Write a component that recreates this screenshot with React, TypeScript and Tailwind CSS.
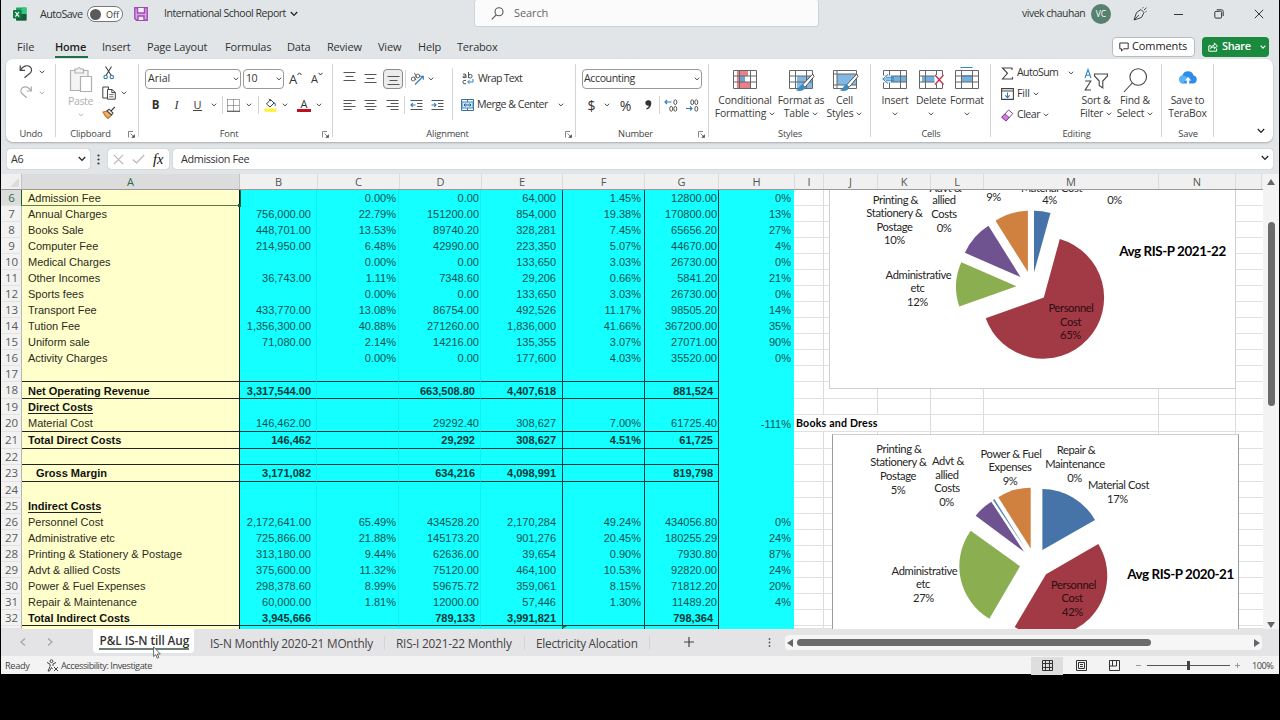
import React from "react";

type Kids = { children?: React.ReactNode };

const Chev = ({ className = "" }: { className?: string }) => (
  <svg viewBox="0 0 6 4" className={`h-[4px] w-[6px] shrink-0 ${className}`} fill="none" stroke="#444" strokeWidth="1">
    <path d="M0.8 0.7 L3 2.9 L5.2 0.7" />
  </svg>
);

const BigChev = ({ className = "" }: { className?: string }) => (
  <svg viewBox="0 0 8 6" className={`h-[6px] w-[8px] shrink-0 ${className}`} fill="none" stroke="#222" strokeWidth="1.3">
    <path d="M0.8 1 L4 4.4 L7.2 1" />
  </svg>
);

const Launcher = () => (
  <svg viewBox="0 0 7 7" className="h-[7px] w-[7px]" fill="none" stroke="#666" strokeWidth="0.8">
    <path d="M0.5 6.5 V0.5 H5 M2.5 2.5 L6 6" />
    <path d="M6.8 3.2 V6.8 H3.2 Z" fill="#444" stroke="none" />
  </svg>
);

const Sep = ({ className = "" }: { className?: string }) => (
  <div className={`w-px shrink-0 bg-[#d4d4d4] ${className}`} />
);

const Group = ({ label, width, launcher, children }: Kids & { label: string; width: string; launcher?: boolean }) => (
  <div className={`flex h-[83px] shrink-0 ${width}`}>
    <div className="flex min-w-0 flex-1 flex-col">
      <div className="h-[68px]">{children}</div>
      <div className="flex h-[14px] items-center text-[9.3px] leading-[14px] tracking-[-0.2px] text-[#444]">
        <div className={`flex-1 text-center whitespace-nowrap ${launcher ? "pr-[3px]" : "pl-[1px]"}`}>{label}</div>
        {launcher && <div className="w-[10px]"><Launcher /></div>}
      </div>
    </div>
    <Sep className="mt-[5px] h-[73px]" />
  </div>
);

const Lines = ({ rows, className = "" }: { rows: [number, number, number][]; className?: string }) => (
  <svg viewBox="0 0 13 13" className={`h-[13px] w-[13px] shrink-0 ${className}`} stroke="#555" strokeWidth="1">
    {rows.map(([a, b, y]) => (
      <path key={y} d={`M${a} ${y} H${b}`} />
    ))}
  </svg>
);

const IndentIcon = ({ out, className = "" }: { out?: boolean; className?: string }) => (
  <svg viewBox="0 0 13 13" className={`h-[13px] w-[13px] shrink-0 ${className}`} fill="none" strokeWidth="1">
    <path stroke="#555" d="M0.5 1.5 H12.5 M7 4.5 H12.5 M7 7.5 H12.5 M0.5 10.5 H12.5" />
    <path stroke="#2f7cb8" strokeWidth="1.1" d={out ? "M5.5 6 H1 M2.8 4.2 L1 6 L2.8 7.8" : "M0.5 6 H5 M3.2 4.2 L5 6 L3.2 7.8"} />
  </svg>
);

const DecimalIcon = ({ dec, className = "" }: { dec?: boolean; className?: string }) => (
  <svg viewBox="0 0 14 13" className={`h-[13px] w-[14px] shrink-0 ${className}`} fill="none">
    <g stroke="#555" strokeWidth="1">
      <ellipse cx="11.3" cy="3.2" rx="1.5" ry="2.4" />
      <ellipse cx="11.3" cy="9.8" rx="1.5" ry="2.4" />
      {dec ? <ellipse cx="7.2" cy="3.2" rx="1.5" ry="2.4" /> : <ellipse cx="7.2" cy="9.8" rx="1.5" ry="2.4" />}
    </g>
    <path stroke="#2f7cb8" strokeWidth="1.1" d={dec ? "M1 9.5 H7 M5 7.5 L7 9.5 L5 11.5" : "M7.5 3 H1 M3 1 L1 3 L3 5"} />
  </svg>
);

const BigButton = ({ icon, lines, width, chev }: { icon: React.ReactNode; lines: string[]; width: string; chev?: "below" | "inline" }) => (
  <div className={`flex shrink-0 flex-col items-center text-[10.4px] leading-[13px] text-[#3a3a3a] ${width}`}>
    <div className="flex h-[35px] items-end justify-center pb-[2px]">{icon}</div>
    <div className="whitespace-nowrap tracking-[-0.2px]">{lines[0]}</div>
    {chev === "below" ? (
      <div className="flex h-[13px] items-center"><Chev /></div>
    ) : (
      <div className="flex items-center whitespace-nowrap tracking-[-0.2px]">
        {lines[1]}
        {chev === "inline" && <Chev className="ml-[3px]" />}
      </div>
    )}
  </div>
);

const Brush = () => (
  <>
    <path d="M24.8 6 L14.5 17 L17 19.3 L26 8.5 Z" fill="#fff" stroke="#555" strokeWidth="1" />
    <path d="M14.8 16.5 C11 17 11.5 21.5 7.5 22 C11 24 16.8 23 17.3 19 Z" fill="#3c8cc4" />
  </>
);

const GridIcon = ({ kind }: { kind: "cond" | "table" | "cell" | "insert" | "delete" | "format" }) => (
  <svg viewBox="0 0 26 24" className="h-[24px] w-[26px] overflow-visible" fill="none" strokeWidth="1">
    {kind === "cond" && (
      <>
        <path fill="#e8808a" d="M5 2h11v6H5z M5 14h13v6H5z" />
        <path fill="#e8808a" d="M5 8h3v6H5z" />
        <path fill="#6aa3d6" d="M8 8h5v6H8z" />
      </>
    )}
    {kind === "table" && <path fill="#7fb9e4" d="M9 8h15v12H9z" />}
    {kind === "cell" && <path fill="#7fb9e4" d="M5 6h19v11H5z" />}
    {kind === "insert" && <path fill="#6fb1e2" d="M8 8h17v6H8z" />}
    {kind === "delete" && <path fill="#6fb1e2" d="M4 8h13v6H4z" />}
    {kind === "format" && <path fill="#6fb1e2" d="M7 7h11v7H7z" />}
    {kind === "cell" ? (
      <path stroke="#666" d="M1.5 2.5 H24.5 V20.5 H1.5 Z M1.5 6 H24.5 M1.5 17 H24.5 M5 2.5 V20.5" />
    ) : (
      <path stroke="#666" d="M1.5 2.5 H24.5 V20.5 H1.5 Z M1.5 8 H24.5 M1.5 14 H24.5 M7.5 2.5 V20.5 M18.5 2.5 V20.5" />
    )}
    {(kind === "table" || kind === "cell") && <Brush />}
    {kind === "insert" && (
      <>
        <path d="M0 7.5 H9 V14.5 H0 Z" fill="#fff" />
        <path d="M12 11 H0.8 M6 6.5 L0.8 11 L6 15.5 M4 9.3 H12 M4 12.7 H12" stroke="#2f86c4" />
      </>
    )}
    {kind === "delete" && (
      <>
        <path d="M16.5 7 H26 V16 H16.5 Z" fill="#fff" />
        <path d="M17 7 L25.5 16.5 M25.5 7 L17 16.5" stroke="#c4314b" strokeWidth="1.3" />
      </>
    )}
    {kind === "format" && <path d="M6.5 -0.5 H18.5" stroke="#2f86c4" />}
  </svg>
);

/* ---------- spreadsheet ---------- */

type RowData = { n: number; h: string; a?: string; v?: string[]; bold?: boolean; ul?: boolean; indent?: boolean; line?: boolean };

const rows: RowData[] = [
  { n: 6, h: "h-[16px]", a: "Admission Fee", v: ["", "0.00%", "0.00", "64,000", "1.45%", "12800.00", "0%"] },
  { n: 7, h: "h-[16px]", a: "Annual Charges", v: ["756,000.00", "22.79%", "151200.00", "854,000", "19.38%", "170800.00", "13%"] },
  { n: 8, h: "h-[16px]", a: "Books Sale", v: ["448,701.00", "13.53%", "89740.20", "328,281", "7.45%", "65656.20", "27%"] },
  { n: 9, h: "h-[16px]", a: "Computer Fee", v: ["214,950.00", "6.48%", "42990.00", "223,350", "5.07%", "44670.00", "4%"] },
  { n: 10, h: "h-[16px]", a: "Medical Charges", v: ["", "0.00%", "0.00", "133,650", "3.03%", "26730.00", "0%"] },
  { n: 11, h: "h-[16px]", a: "Other Incomes", v: ["36,743.00", "1.11%", "7348.60", "29,206", "0.66%", "5841.20", "21%"] },
  { n: 12, h: "h-[16px]", a: "Sports fees", v: ["", "0.00%", "0.00", "133,650", "3.03%", "26730.00", "0%"] },
  { n: 13, h: "h-[16px]", a: "Transport Fee", v: ["433,770.00", "13.08%", "86754.00", "492,526", "11.17%", "98505.20", "14%"] },
  { n: 14, h: "h-[16px]", a: "Tution Fee", v: ["1,356,300.00", "40.88%", "271260.00", "1,836,000", "41.66%", "367200.00", "35%"] },
  { n: 15, h: "h-[16px]", a: "Uniform sale", v: ["71,080.00", "2.14%", "14216.00", "135,355", "3.07%", "27071.00", "90%"] },
  { n: 16, h: "h-[16px]", a: "Activity Charges", v: ["", "0.00%", "0.00", "177,600", "4.03%", "35520.00", "0%"] },
  { n: 17, h: "h-[16px]", line: true },
  { n: 18, h: "h-[17px]", a: "Net Operating Revenue", v: ["3,317,544.00", "", "663,508.80", "4,407,618", "", "881,524", ""], bold: true, line: true },
  { n: 19, h: "h-[16px]", a: "Direct Costs", bold: true, ul: true },
  { n: 20, h: "h-[17px]", a: "Material Cost", v: ["146,462.00", "", "29292.40", "308,627", "7.00%", "61725.40", "-111%"], line: true },
  { n: 21, h: "h-[17px]", a: "Total Direct Costs", v: ["146,462", "", "29,292", "308,627", "4.51%", "61,725", ""], bold: true, line: true },
  { n: 22, h: "h-[16px]", line: true },
  { n: 23, h: "h-[17px]", a: "Gross Margin", v: ["3,171,082", "", "634,216", "4,098,991", "", "819,798", ""], bold: true, indent: true, line: true },
  { n: 24, h: "h-[16px]" },
  { n: 25, h: "h-[16px]", a: "Indirect Costs", bold: true, ul: true },
  { n: 26, h: "h-[16px]", a: "Personnel Cost", v: ["2,172,641.00", "65.49%", "434528.20", "2,170,284", "49.24%", "434056.80", "0%"] },
  { n: 27, h: "h-[16px]", a: "Administrative etc", v: ["725,866.00", "21.88%", "145173.20", "901,276", "20.45%", "180255.29", "24%"] },
  { n: 28, h: "h-[16px]", a: "Printing & Stationery & Postage", v: ["313,180.00", "9.44%", "62636.00", "39,654", "0.90%", "7930.80", "87%"] },
  { n: 29, h: "h-[16px]", a: "Advt & allied Costs", v: ["375,600.00", "11.32%", "75120.00", "464,100", "10.53%", "92820.00", "24%"] },
  { n: 30, h: "h-[16px]", a: "Power & Fuel Expenses", v: ["298,378.60", "8.99%", "59675.72", "359,061", "8.15%", "71812.20", "20%"] },
  { n: 31, h: "h-[16px]", a: "Repair & Maintenance", v: ["60,000.00", "1.81%", "12000.00", "57,446", "1.30%", "11489.20", "4%"] },
  { n: 32, h: "h-[16px]", a: "Total Indirect Costs", v: ["3,945,666", "", "789,133", "3,991,821", "", "798,364", ""], bold: true, line: true },
  { n: 33, h: "h-[3px]" },
];

const colClass = [
  "w-[77px] pr-[5px] border-r border-r-[#10f0f0]",
  "w-[82px] pr-[2px] border-r border-r-[#10f0f0]",
  "w-[82px] border-r border-r-[#10f0f0]",
  "w-[82px] pr-[6px] border-r border-r-[#063c3c]",
  "w-[82px] pr-[3px] border-r border-r-[#063c3c]",
  "w-[74px] border-r border-r-[#063c3c]",
  "w-[75px] pr-[3px]",
];

const freeCols = ["w-[30px]", "w-[54px]", "w-[53px]", "w-[53px]", "w-[175px]", "w-[77px]", "w-[27px]"];

const headCols: [string, string][] = [
  ["B", "w-[78px]"], ["C", "w-[82px]"], ["D", "w-[82px]"], ["E", "w-[81px]"], ["F", "w-[82px]"], ["G", "w-[74px]"], ["H", "w-[76px]"],
  ["I", "w-[29px]"], ["J", "w-[54px]"], ["K", "w-[53px]"], ["L", "w-[53px]"], ["M", "w-[175px]"], ["N", "w-[77px]"], ["", "w-[26px]"],
];

const SheetRow = ({ r }: { r: RowData }) => {
  const line = r.line ? "border-b border-b-[#063c3c]" : "";
  return (
    <div className={`flex shrink-0 overflow-hidden ${r.h}`}>
      <div className={`flex w-[21px] shrink-0 items-center justify-center border-r border-b border-r-[#b5b5b5] border-b-[#e2e2e2] pl-[1px] font-['Open_Sans',sans-serif] text-[11.5px] ${r.n === 6 ? "bg-[#dcdcdc] text-[#2c6b49]" : "bg-[#f2f2f2] text-[#5b5b5b]"}`}>
        {r.n < 33 ? r.n : ""}
      </div>
      <div className={`flex w-[218px] shrink-0 items-center border-r border-r-[#0a1f1a] bg-[#ffffcc] whitespace-nowrap ${r.indent ? "pl-[14px]" : "pl-[6px]"} ${r.bold ? "font-bold text-[#111]" : "text-[#2b2b20]"} ${r.line ? "border-b border-b-[#222]" : ""} ${r.n === 18 ? "pt-[2px]" : ""}`}>
        <span className={r.ul ? "mt-[1px] border-b border-b-[#222] leading-[11px]" : ""}>{r.a}</span>
      </div>
      <div className={`flex bg-[#14ffff] ${r.bold ? "font-bold text-[#043838]" : "text-[#0a5252]"}`}>
        {colClass.map((c, i) => (
          <div
            key={i}
            className={`flex shrink-0 items-center justify-end whitespace-nowrap ${c} ${i === 2 ? (r.bold ? "pr-[5px]" : "pr-[1px]") : ""} ${i === 5 ? (r.bold ? "pr-[5px]" : "pr-[1px]") : ""} ${i < 6 ? line : ""} ${r.n === 18 ? "pt-[2px]" : ""}`}
          >
            {r.v ? r.v[i] : ""}
          </div>
        ))}
      </div>
      <div className="flex">
        {freeCols.map((c, i) => (
          <div
            key={i}
            className={`shrink-0 border-b border-b-[#e0e0e0] ${c} ${r.n === 20 && i < 2 ? "" : i < 6 ? "border-r border-r-[#dcdcdc]" : ""}`}
          >
            {r.n === 20 && i === 0 && (
              <div className="w-[86px] pl-[2px] text-[10.6px] leading-[17px] font-bold whitespace-nowrap text-black font-['Lato',sans-serif] tracking-[0.2px]">Books and Dress</div>
            )}
          </div>
        ))}
      </div>
    </div>
  );
};

type Label = [string, number, number];

const ChartText = ({ labels, dark }: { labels: Label[]; dark?: boolean }) => (
  <g fontSize="11.2" letterSpacing="-0.38" textAnchor="middle" fill={dark ? "#2e0d10" : "#262626"}>
    {labels.map(([t, x, y], i) => (
      <text key={i} x={x} y={y + 4}>{t}</text>
    ))}
  </g>
);

const ChartOne = () => (
  <div className="absolute top-[-1px] left-[828px] h-[200px] w-[407px] border border-[#cfcfcf] bg-white">
    <svg viewBox="829.5 190 405 198" className="h-[198px] w-[405px] font-['Lato',sans-serif]">
      <path fill="#4673a8" d="M1033.5 272.5 V210.7 A62 62 0 0 1 1050 213 Z" />
      <path fill="#a23a46" d="M1043.3 297.4 L1059.3 239 A61 61 0 1 1 985.2 318.3 Z" />
      <path fill="#8aae50" d="M1016 286.3 L958.8 306.6 A61 61 0 0 1 960.8 262.3 Z" />
      <path fill="#6e5390" d="M1020 277 L964.4 252.8 A61 61 0 0 1 988 225.7 Z" />
      <path fill="#d0803f" d="M1027.4 272 L995 220.8 A61 61 0 0 1 1027.4 210.7 Z" />
      <ChartText labels={[
        ["Printing &", 895, 200], ["Stationery &", 894, 213], ["Postage", 894, 227], ["10%", 894, 240.3],
        ["Advt &", 945, 187.6], ["allied", 943.5, 200.3], ["Costs", 943.5, 214], ["0%", 943.5, 227.5],
        ["9%", 993, 197], ["Material Cost", 1051, 187.6], ["4%", 1049, 200.3], ["0%", 1114, 200],
        ["Administrative", 918, 274.5], ["etc", 917, 288], ["12%", 917, 301.5],
      ]} />
      <ChartText dark labels={[["Personnel", 1070.5, 308], ["Cost", 1070, 321.5], ["65%", 1070, 335]]} />
      <text x="1172" y="256" fontSize="13.4" letterSpacing="-0.42" fontWeight="bold" textAnchor="middle" fill="#000">Avg RIS-P 2021-22</text>
    </svg>
  </div>
);

const ChartTwo = () => (
  <div className="absolute top-[244px] left-[831px] h-[220px] w-[407px] border border-[#9c9c9c] border-t-[#cfcfcf] bg-white">
    <svg viewBox="833 435 405 218" className="h-[218px] w-[405px] font-['Lato',sans-serif]">
      <path fill="#4673a8" d="M1042.4 550 V489 A61 61 0 0 1 1095 520 Z" />
      <path fill="#a23a46" d="M1046 574.3 L1098.3 544 A60.5 60.5 0 0 1 1014.7 627 Z" />
      <path fill="#8aae50" d="M1020 566.3 L989.3 618.7 A61 61 0 0 1 970.7 530.7 Z" />
      <path fill="#6e5390" d="M1024 551.7 L975.7 515.7 A61 61 0 0 1 991.3 501.7 Z" />
      <path fill="#4f86b0" d="M1026 549.5 L993 500 L994.4 499 Z" />
      <path fill="#d0803f" d="M1030.7 548.5 L998.3 497.3 A61 61 0 0 1 1030.7 487.7 Z" />
      <ChartText labels={[
        ["Printing &", 899, 449], ["Stationery &", 898.5, 462.3], ["Postage", 898, 476.3], ["5%", 898, 489.8],
        ["Advt &", 948, 461], ["allied", 947, 474.5], ["Costs", 947, 488.3], ["0%", 946.5, 501.8],
        ["Power & Fuel", 1011, 453.8], ["Expenses", 1010, 467], ["9%", 1010, 481],
        ["Repair &", 1076, 450.3], ["Maintenance", 1075, 464], ["0%", 1074.5, 477.8],
        ["Material Cost", 1118.5, 485], ["17%", 1117.5, 498.6],
        ["Administrative", 924.5, 570.5], ["etc", 923, 584], ["27%", 923.5, 597.6],
      ]} />
      <ChartText dark labels={[["Personnel", 1073.5, 584.5], ["Cost", 1072, 598], ["42%", 1072.5, 611.6]]} />
      <text x="1180.5" y="579" fontSize="13.4" letterSpacing="-0.42" fontWeight="bold" textAnchor="middle" fill="#000">Avg RIS-P 2020-21</text>
    </svg>
  </div>
);

/* ---------- chrome ---------- */

const TitleBar = () => (
  <div className="flex h-[28px] items-center text-[10.8px] text-[#333]">
    <svg viewBox="0 0 14 14" className="ml-[12px] h-[14px] w-[14px]">
      <rect x="3" y="0.5" width="10.5" height="13" rx="1" fill="#21a366" />
      <rect x="3" y="7" width="10.5" height="6.5" fill="#185c37" />
      <rect x="8.5" y="0.5" width="5" height="6.5" fill="#33c481" />
      <rect x="0" y="3" width="8.5" height="8.5" rx="1" fill="#107c41" />
      <path d="M2.4 5 L6 9.6 M6 5 L2.4 9.6" stroke="#fff" strokeWidth="1.2" />
    </svg>
    <div className="ml-[13px] w-[47px] tracking-[-0.6px]">AutoSave</div>
    <div className="flex h-[16px] w-[36px] items-center rounded-full border border-[#777] bg-white">
      <div className="ml-[2px] h-[11px] w-[11px] rounded-full bg-[#5a5a5a]" />
      <div className="ml-[5px] text-[9px] leading-none">Off</div>
    </div>
    <svg viewBox="0 0 14 14" className="ml-[11px] h-[14px] w-[14px]" fill="none" stroke="#a04cb4" strokeWidth="1.4">
      <path d="M0.8 0.8 H13.2 V13.2 H2.5 L0.8 11.5 Z" fill="#d9a4e4" />
      <path d="M3.5 1 V6 H10.5 V1 M4 13 V9 H10 V13" fill="#f2ecf6" />
    </svg>
    <div className="ml-[16px] w-[122px] text-[10.5px] tracking-[-0.46px] whitespace-nowrap">International School Report</div>
    <BigChev className="ml-[4px]" />
    <div className="ml-[176px] mb-[1px] flex h-[27px] w-[345px] items-center self-start rounded-[3px] border border-t-0 border-[#cfd3d5] bg-[#fbfbfb] text-[11px] tracking-[-0.1px] text-[#666]">
      <svg viewBox="0 0 13 13" className="ml-[16px] h-[13px] w-[13px]" fill="none" stroke="#555" strokeWidth="1.1">
        <circle cx="8" cy="4.8" r="4" />
        <path d="M5.2 7.8 L0.8 12.3" />
      </svg>
      <div className="ml-[10px]">Search</div>
    </div>
    <div className="ml-[203px] w-[63px] text-[10.4px] tracking-[-0.45px] whitespace-nowrap">vivek chauhan</div>
    <div className="ml-[6px] flex h-[20px] w-[20px] items-center justify-center rounded-full bg-[#56806f] text-[8.5px] text-white">VC</div>
    <svg viewBox="0 0 14 14" className="ml-[22px] h-[14px] w-[14px]" fill="none" stroke="#444" strokeWidth="1">
      <path d="M1 13 L3.5 5.5 L8 2.5 L11 5.5 L8.5 10.5 L1 13 Z M1 13 L5.8 8" />
      <path d="M9.5 1 L10.5 0.5 M11 3 L13.5 0.8 M12.5 4.8 L13.6 4.3" />
    </svg>
    <div className="ml-[27px] h-px w-[9px] bg-[#333]" />
    <svg viewBox="0 0 10 10" className="ml-[31px] h-[10px] w-[10px]" fill="none" stroke="#333" strokeWidth="1">
      <rect x="0.8" y="2.3" width="6.8" height="6.8" rx="1.2" />
      <path d="M2.8 0.8 H7.5 Q9.2 0.8 9.2 2.5 V7" />
    </svg>
    <svg viewBox="0 0 10 10" className="ml-[30px] h-[10px] w-[10px]" stroke="#333" strokeWidth="1">
      <path d="M0.8 0.8 L9.2 9.2 M9.2 0.8 L0.8 9.2" />
    </svg>
  </div>
);

const menu: [string, string][] = [
  ["Insert", "ml-[14px] w-[30px]"], ["Page Layout", "ml-[15px] w-[63px]"], ["Formulas", "ml-[15px] w-[47px]"],
  ["Data", "ml-[15px] w-[25px]"], ["Review", "ml-[15px] w-[36px]"], ["View", "ml-[15px] w-[25px]"],
  ["Help", "ml-[15px] w-[25px]"], ["Terabox", "ml-[14px] w-[41px]"],
];

const MenuBar = () => (
  <div className="flex h-[31px] items-center text-[11px] text-[#333]">
    <div className="ml-[16px] mt-[7px] w-[20px]">File</div>
    <div className="ml-[18px] mt-[8px] h-[21px] w-[33px] border-b-2 border-[#1e7145] leading-[19px] font-semibold text-[#1f1f1f] tracking-[-0.2px]">Home</div>
    {menu.map(([t, c]) => (
      <div key={t} className={`mt-[7px] whitespace-nowrap tracking-[-0.2px] ${c}`}>{t}</div>
    ))}
    <div className="ml-auto mt-[6px] flex h-[20px] w-[83px] items-center rounded-[4px] border border-[#b8bcbe] bg-white pl-[6px] text-[#222]">
      <svg viewBox="0 0 10 10" className="h-[10px] w-[10px]" fill="none" stroke="#333" strokeWidth="1">
        <path d="M0.8 1 H9.2 V6.8 H4.8 L2.5 9 V6.8 H0.8 Z" />
      </svg>
      <div className="ml-[3px] tracking-[-0.1px]">Comments</div>
    </div>
    <div className="mr-[10px] ml-[7px] mt-[6px] flex h-[20px] w-[67px] items-center rounded-[4px] bg-[#198a3e] pl-[6px] text-white">
      <svg viewBox="0 0 10 10" className="h-[10px] w-[10px]" fill="none" stroke="#fff" strokeWidth="1">
        <path d="M3 3.8 H0.8 V9.2 H8.6 V6.5 M2.5 6.5 Q3 3.5 6.3 3.2 V1 L9.4 4 L6.3 6.8 V4.8 Q3.5 5 2.5 6.5 Z" />
      </svg>
      <div className="ml-[4px] font-semibold tracking-[-0.35px]">Share</div>
      <svg viewBox="0 0 6 4" className="ml-[9px] h-[4px] w-[6px]" fill="none" stroke="#fff" strokeWidth="1.1">
        <path d="M0.6 0.7 L3 3.1 L5.4 0.7" />
      </svg>
    </div>
  </div>
);

const Ribbon = () => (
  <div className="mx-[5px] flex h-[83px] w-[1267px] rounded-[7px] bg-white text-[10.6px] text-[#333] shadow-[0_1px_2px_rgba(0,0,0,0.25)]">
    <Group label="Undo" width="w-[50px]">
      <div className="flex items-center pt-[5px] pl-[13px]">
        <svg viewBox="0 0 14 15" className="h-[15px] w-[14px]" fill="none" stroke="#444" strokeWidth="1.2">
          <path d="M1.2 1.5 V6.3 H6 M1.5 6 C4 2 8 0.8 10.7 2.6 C14 5 12.5 8.3 10 10 L5.5 13.8" />
        </svg>
        <Chev className="ml-[6px]" />
      </div>
      <div className="flex items-center pt-[6px] pl-[13px] opacity-45">
        <svg viewBox="0 0 14 15" className="h-[15px] w-[14px]" fill="none" stroke="#444" strokeWidth="1.2">
          <path d="M12.3 1.5 V6 H7.8 M12 5.8 C10 2 6 1 3.5 2.6 C0.5 5 2 8 4 9.5 L7.8 12.8" />
        </svg>
        <Chev className="ml-[6px]" />
      </div>
    </Group>
    <Group label="Clipboard" width="w-[83px]" launcher>
      <div className="flex">
        <div className="ml-[10px] flex w-[29px] flex-col items-center pt-[7px]">
          <svg viewBox="0 0 24 27" className="h-[27px] w-[24px]" fill="#f4f4f4" stroke="#b0b0b0" strokeWidth="1.2">
            <path d="M1.5 4.5 H19 V24.5 H1.5 Z" />
            <path d="M6 3 H8.5 Q10 0 11.8 3 H14.5 V7 H6 Z" />
            <path d="M11.5 10.5 H22.5 V25.5 H11.5 Z" fill="#fff" />
          </svg>
          <div className="mt-[2px] text-[10.6px] leading-[13px] text-[#b0b0b0] tracking-[-0.4px]">Paste</div>
          <Chev className="mt-[5px] opacity-40" />
        </div>
        <div className="ml-[7px] flex flex-col pt-[7px]">
          <svg viewBox="0 0 12 14" className="ml-[1px] h-[14px] w-[12px]" fill="none" strokeWidth="1.1">
            <path d="M2.5 0.5 L8.3 9.5 M8.5 0.5 L3 9.5" stroke="#444" />
            <circle cx="2.6" cy="11" r="1.7" stroke="#2f7cb8" />
            <circle cx="8.8" cy="11" r="1.7" stroke="#2f7cb8" />
          </svg>
          <div className="mt-[6px] flex items-center">
            <svg viewBox="0 0 14 14" className="h-[14px] w-[14px]" fill="#fff" stroke="#444" strokeWidth="1">
              <path d="M5.5 12 H0.8 V1 H6.5 V3" />
              <path d="M5.5 3.5 H10 L13.3 6.5 V13.2 H5.5 Z M9.8 3.5 V6.6 H13.3" />
              <path d="M7.3 8.6 H11.5 M7.3 10.8 H11.5" strokeWidth="0.8" />
            </svg>
            <Chev className="ml-[5px]" />
          </div>
          <svg viewBox="0 0 14 13" className="mt-[6px] h-[13px] w-[14px]" fill="none" strokeWidth="1.1">
            <path d="M1 6 L5.5 5 L9.5 9 L6 12.5 Q3 10.5 1 6 Z" fill="#f3b05c" stroke="#c4712c" />
            <path d="M5 5 L7 3.2 L11 7 L9.5 9 Z M9 5 L12.8 1" stroke="#444" fill="#fff" />
          </svg>
        </div>
      </div>
    </Group>
    <Group label="Font" width="w-[194px]" launcher>
      <div className="flex items-center pt-[10px] pl-[6px]">
        <div className="flex h-[20px] w-[96px] items-center justify-between rounded-[4px] border border-[#999] pr-[1px] pl-[2px]">
          Arial <Chev />
        </div>
        <div className="ml-[2px] flex h-[20px] w-[41px] items-center justify-between rounded-[4px] border border-[#999] pr-[1px] pl-[2px] tracking-[-0.6px]">
          10 <Chev />
        </div>
        <div className="ml-[5px] flex w-[14px] items-start">
          <span className="text-[13px] leading-[14px]">A</span>
          <svg viewBox="0 0 5 4" className="h-[4px] w-[5px] shrink-0" fill="none" stroke="#333"><path d="M0.5 3 L2.5 0.8 L4.5 3" /></svg>
        </div>
        <div className="ml-[8px] flex w-[14px] items-start">
          <span className="text-[11px] leading-[14px]">A</span>
          <svg viewBox="0 0 5 4" className="h-[4px] w-[5px] shrink-0" fill="none" stroke="#333"><path d="M0.5 0.8 L2.5 3 L4.5 0.8" /></svg>
        </div>
      </div>
      <div className="flex h-[20px] items-center mt-[6px]">
        <div className="ml-[12px] w-[9px] text-center text-[11.5px] font-bold">B</div>
        <div className="ml-[12px] w-[9px] text-center text-[12px] font-['Liberation_Serif',serif] italic">I</div>
        <div className="ml-[12px] w-[9px] border-b border-[#444] text-center text-[11px] leading-[11px]">U</div>
        <Chev className="ml-[9px]" />
        <Sep className="ml-[5px] h-[18px]" />
        <svg viewBox="0 0 13 13" className="ml-[4px] h-[13px] w-[13px]" fill="none" stroke="#555" strokeWidth="1">
          <path strokeDasharray="1 1" d="M0.5 0.5 H12.5 V12 M0.5 0.5 V12 M6.5 0.5 V12 M0.5 6.5 H12.5" />
          <path d="M0 12.3 H13" strokeWidth="1.2" />
        </svg>
        <Chev className="ml-[6px]" />
        <Sep className="ml-[6px] h-[18px]" />
        <svg viewBox="0 0 14 14" className="ml-[5px] h-[14px] w-[14px]" fill="none">
          <path d="M0.5 10.5 H12.5 V13.8 H0.5 Z" fill="#fff03a" />
          <path d="M2.5 6 L6.5 1.5 L10 5 L6 9 Z M5 0.8 L7 3" stroke="#444" strokeWidth="1" />
          <path d="M10 4.5 Q12 6.5 11.3 8" stroke="#2f7cb8" strokeWidth="1.2" />
        </svg>
        <Chev className="ml-[4px]" />
        <div className="ml-[9px] h-[14px] w-[14px] border-b-[3px] border-[#c00f1e] text-center text-[11px] leading-[11px]">A</div>
        <Chev className="ml-[5px]" />
      </div>
    </Group>
    <Group label="Alignment" width="w-[243px]" launcher>
      <div className="flex">
        <div className="w-[119px]">
          <div className="mt-[9px] flex h-[21px] items-center">
            <Lines className="ml-[10px]" rows={[[0.5, 12.5, 0.5], [2.5, 10.5, 4.5], [0.5, 12.5, 8.5]]} />
            <Lines className="ml-[8px]" rows={[[0.5, 12.5, 2.5], [2.5, 10.5, 6.5], [0.5, 12.5, 10.5]]} />
            <div className="ml-[6px] flex h-[20px] w-[20px] items-center justify-center rounded-[4px] border border-[#8a8a8a] bg-[#ececec]">
              <Lines rows={[[0.5, 12.5, 4.5], [2.5, 10.5, 8.5], [0.5, 12.5, 12.5]]} />
            </div>
            <Sep className="ml-[2px] h-[18px]" />
            <svg viewBox="0 0 15 14" className="ml-[4px] h-[14px] w-[15px] overflow-visible" fill="none">
              <g stroke="#555" strokeWidth="0.9">
                <circle cx="3.2" cy="7" r="1.9" />
                <path d="M4.2 4.6 L6 8.2" />
                <circle cx="7.8" cy="4" r="1.9" />
                <path d="M4.4 0.8 L6.6 5.4" />
              </g>
              <path d="M5 12.5 L13 4.5 M9.8 4.2 H13.3 V7.7" stroke="#2f7cb8" strokeWidth="1.1" />
            </svg>
            <Chev className="ml-[3px]" />
          </div>
          <div className="mt-[6px] flex h-[20px] items-center">
            <Lines className="ml-[10px]" rows={[[0.5, 12.5, 1.5], [0.5, 8.5, 4.5], [0.5, 12.5, 7.5], [0.5, 8.5, 10.5]]} />
            <Lines className="ml-[8px]" rows={[[0.5, 12.5, 1.5], [2.5, 10.5, 4.5], [0.5, 12.5, 7.5], [2.5, 10.5, 10.5]]} />
            <Lines className="ml-[9px]" rows={[[0.5, 12.5, 1.5], [4.5, 12.5, 4.5], [0.5, 12.5, 7.5], [4.5, 12.5, 10.5]]} />
            <Sep className="ml-[5px] h-[18px]" />
            <IndentIcon out className="ml-[5px]" />
            <IndentIcon className="ml-[8px]" />
          </div>
        </div>
        <Sep className="mt-[9px] h-[52px]" />
        <div>
          <div className="mt-[9px] flex h-[21px] items-center">
            <svg viewBox="0 0 12 13" className="ml-[9px] h-[13px] w-[12px] overflow-visible" fill="none">
              <g stroke="#555" strokeWidth="1">
                <path d="M1 2.2 Q4 1.2 4 3.5 V6 M4 3.8 Q0.7 3.8 0.8 5 Q1.6 6.6 4 4.9" />
                <path d="M6.5 0 V6" />
                <circle cx="8.3" cy="4.2" r="1.8" />
                <path d="M4 8.4 Q0.8 7.8 0.8 10 Q0.8 12.4 4 11.7" />
              </g>
              <path d="M11 7 V10 H5.8 M7.5 8.2 L5.7 10 L7.5 11.8" stroke="#2f7cb8" />
            </svg>
            <div className="ml-[4px] whitespace-nowrap tracking-[-0.7px]">Wrap Text</div>
          </div>
          <div className="mt-[6px] flex h-[20px] items-center">
            <svg viewBox="0 0 13 12" className="ml-[8px] h-[12px] w-[13px]" fill="none" strokeWidth="1">
              <path d="M0.5 0.5 H12.5 V11.5 H0.5 Z M6.5 0.5 V3 M6.5 9 V11.5" stroke="#3c6f96" />
              <path d="M1 3 H12 V9 H1 Z" fill="#cfe6f7" stroke="#3c8cc4" />
              <path d="M3 6 H10 M4.5 4.5 L3 6 L4.5 7.5 M8.5 4.5 L10 6 L8.5 7.5" stroke="#1f5c8c" />
            </svg>
            <div className="ml-[3px] w-[72px] whitespace-nowrap tracking-[-0.5px]">Merge &amp; Center</div>
            <Chev className="ml-[9px]" />
          </div>
        </div>
      </div>
    </Group>
    <Group label="Number" width="w-[133px]" launcher>
      <div className="mt-[10px] ml-[6px] flex h-[20px] w-[120px] items-center justify-between rounded-[4px] border border-[#999] pr-[1px] pl-[1px] tracking-[-0.4px]">
        Accounting <Chev />
      </div>
      <div className="mt-[6px] flex h-[20px] items-center text-[14px]">
        <div className="ml-[11px] w-[9px] text-center">$</div>
        <Chev className="ml-[8px]" />
        <div className="ml-[9px] w-[13px] text-center">%</div>
        <svg viewBox="0 0 7 10" className="ml-[13px] h-[10px] w-[7px]" fill="#333"><path d="M3.4 0.3 A2.7 2.7 0 1 0 4 5.5 Q3.6 7.5 1.2 8.6 L1.8 9.5 Q6.3 7.6 6.3 3.2 A2.8 2.8 0 0 0 3.4 0.3 Z" /></svg>
        <Sep className="ml-[7px] h-[18px]" />
        <DecimalIcon className="ml-[4px]" />
        <DecimalIcon dec className="ml-[7px]" />
      </div>
    </Group>
    <Group label="Styles" width="w-[162px]">
      <div className="flex pl-[5px]">
        <BigButton icon={<GridIcon kind="cond" />} lines={["Conditional", "Formatting"]} width="w-[62px]" chev="inline" />
        <BigButton icon={<GridIcon kind="table" />} lines={["Format as", "Table"]} width="w-[50px]" chev="inline" />
        <BigButton icon={<GridIcon kind="cell" />} lines={["Cell", "Styles"]} width="w-[37px]" chev="inline" />
      </div>
    </Group>
    <Group label="Cells" width="w-[120px]">
      <div className="flex pl-[6px]">
        <BigButton icon={<GridIcon kind="insert" />} lines={["Insert"]} width="w-[36px]" chev="below" />
        <BigButton icon={<GridIcon kind="delete" />} lines={["Delete"]} width="w-[36px]" chev="below" />
        <BigButton icon={<GridIcon kind="format" />} lines={["Format"]} width="w-[36px]" chev="below" />
      </div>
    </Group>
    <Group label="Editing" width="w-[171px]">
      <div className="flex">
        <div className="w-[84px] pl-[10px]">
          <div className="mt-[4px] flex h-[20px] items-center tracking-[-0.6px]">
            <svg viewBox="0 0 13 13" className="h-[13px] w-[13px]" fill="none" stroke="#444" strokeWidth="1.1">
              <path d="M11 3 V1 H1.5 L6.5 6.3 L1.5 12 H11.5 V10" />
            </svg>
            <div className="ml-[3px] w-[43px]">AutoSum</div>
            <Chev className="ml-[8px]" />
          </div>
          <div className="mt-[0px] flex h-[21px] items-center">
            <svg viewBox="0 0 13 12" className="h-[12px] w-[13px]" fill="none" strokeWidth="1.1">
              <path d="M0.6 0.6 H12.4 V11.4 H0.6 Z M0.6 3 H12.4" stroke="#444" />
              <path d="M6.5 4.5 V9.6 M4.3 7.4 L6.5 9.6 L8.7 7.4" stroke="#2f7cb8" />
            </svg>
            <div className="ml-[3px] tracking-[-0.2px]">Fill</div>
            <Chev className="ml-[3px]" />
          </div>
          <div className="mt-[1px] flex h-[20px] items-center tracking-[-0.5px]">
            <svg viewBox="0 0 13 13" className="h-[13px] w-[13px]" strokeWidth="1">
              <path d="M0.8 8.2 L7.6 1 L11.8 4.6 L5 12 Z" fill="#fff" stroke="#8a3c96" />
              <path d="M0.8 8.2 L3.9 4.9 L8.2 8.5 L5 12 Z" fill="#cf7fdc" stroke="#8a3c96" />
            </svg>
            <div className="ml-[3px]">Clear</div>
            <Chev className="ml-[3px]" />
          </div>
        </div>
        <BigButton
          icon={
            <svg viewBox="0 0 25 24" className="h-[24px] w-[25px]" fill="none">
              <path d="M1 10 L4 1.5 L7 10 M2 7.2 H6" stroke="#2f86c4" strokeWidth="1.1" />
              <path d="M1.2 13 H6.8 L1.2 22 H7" stroke="#444" strokeWidth="1.1" />
              <path d="M10.5 6 H23.5 V8 L18.8 13 V20 L15.2 17.5 V13 L10.5 8 Z" stroke="#444" strokeWidth="1.1" />
            </svg>
          }
          lines={["Sort &", "Filter"]} width="w-[42px]" chev="inline" />
        <BigButton
          icon={
            <svg viewBox="0 0 25 25" className="mb-[-1px] h-[25px] w-[25px]" fill="none" stroke="#444" strokeWidth="1.1">
              <circle cx="15.2" cy="9" r="8.3" />
              <path d="M9.2 15 L1 24" />
            </svg>
          }
          lines={["Find &", "Select"]} width="w-[36px]" chev="inline" />
      </div>
    </Group>
    <Group label="Save" width="w-[52px]">
      <BigButton
        icon={
          <svg viewBox="0 0 18 15" className="mb-[7px] h-[15px] w-[18px]">
            <path d="M4 13.5 A4 4 0 0 1 3.4 5.6 A5.8 5.8 0 0 1 14.6 5.6 A4 4 0 0 1 14 13.5 Z" fill="#2d8ceb" />
            <path d="M4 13.5 A4 4 0 0 1 3.4 5.6 Q7 5.6 8 8 Z" fill="#57b5f7" />
            <path d="M9 6.8 L12.2 10.5 H10.2 V14 H7.8 V10.5 H5.8 Z" fill="#fff" />
          </svg>
        }
        lines={["Save to", "TeraBox"]} width="w-[51px]" />
    </Group>
    <div className="flex flex-1 items-end justify-end pr-[8px] pb-[8px]"><BigChev /></div>
  </div>
);

const FormulaBar = () => (
  <div className="flex h-[32px] items-start pt-[7px] text-[10.8px] text-[#333]">
    <div className="ml-[6px] flex h-[20px] w-[83px] items-center justify-between rounded-[3px] bg-white pr-[4px] pl-[4px] tracking-[-0.3px] shadow-[0_0_1px_#888]">A6 <BigChev /></div>
    <svg viewBox="0 0 3 11" className="mt-[5px] ml-[7px] h-[11px] w-[3px]" fill="#333">
      <circle cx="1.5" cy="1.5" r="1.1" /><circle cx="1.5" cy="5.5" r="1.1" /><circle cx="1.5" cy="9.5" r="1.1" />
    </svg>
    <div className="ml-[8px] flex h-[20px] w-[61px] items-center rounded-[3px] bg-white shadow-[0_0_1px_#888]">
      <svg viewBox="0 0 11 11" className="ml-[5px] h-[11px] w-[11px]" stroke="#b5b5b5" strokeWidth="1.1"><path d="M0.8 0.8 L10.2 10.2 M10.2 0.8 L0.8 10.2" /></svg>
      <svg viewBox="0 0 13 10" className="ml-[8px] h-[10px] w-[13px]" fill="none" stroke="#b5b5b5" strokeWidth="1.1"><path d="M0.8 5.5 L4.5 9 L12.2 1" /></svg>
      <div className="ml-[8px] text-[14.5px] leading-[18px] font-['Liberation_Serif',serif] italic text-[#111]">fx</div>
    </div>
    <div className="ml-[4px] flex h-[20px] w-[1100px] items-center justify-between rounded-[3px] bg-white pr-[4px] pl-[8px] shadow-[0_0_1px_#888]">
      <span className="tracking-[-0.35px]">Admission Fee</span> <BigChev className="mb-[2px]" />
    </div>
  </div>
);

const Sheet = () => (
  <div className="flex h-[455px] bg-white">
    <div className="flex w-[1262px] flex-col">
      <div className="flex h-[16px] shrink-0 border-b border-[#9a9a9a] bg-[#f0f0f0] text-[11px] leading-[16px] text-[#555]">
        <div className="flex w-[21px] shrink-0 items-end justify-end border-r border-[#c4c4c4] p-[2px]">
          <svg viewBox="0 0 9 9" className="h-[9px] w-[9px]"><path d="M9 0 V9 H0 Z" fill="#dcdcdc" /></svg>
        </div>
        <div className="w-[218px] shrink-0 border-r border-[#c4c4c4] bg-[#dcdcdc] text-center text-[#2c6b49]">A</div>
        {headCols.map(([t, c], i) => (
          <div key={i} className={`shrink-0 border-r border-[#dcdcdc] text-center ${c}`}>{t}</div>
        ))}
      </div>
      <div className="relative flex h-[439px] flex-col overflow-hidden font-['Liberation_Sans',sans-serif] text-[11px] leading-[14px]">
        {rows.map((r) => <SheetRow key={r.n} r={r} />)}
        <div className="absolute top-[-1px] left-[20px] h-[17px] w-[220px] border border-[#1f5c3a] border-b-[#5d7d45]" />
        <div className="absolute top-[14px] left-[237px] h-[3px] w-[3px] bg-[#1f5c3a]" />
        <svg viewBox="0 0 5 3" className="absolute top-[436px] left-[561px] h-[3px] w-[5px]"><path d="M0 0 H5 L0 3 Z" fill="#0b6b3a" /></svg>
        <ChartOne />
        <ChartTwo />
      </div>
    </div>
    <div className="flex flex-1 flex-col items-center bg-[#f3f3f3] pt-[5px]">
      <svg viewBox="0 0 8 6" className="h-[6px] w-[8px]"><path d="M4 0 L8 6 H0 Z" fill="#666" /></svg>
      <div className="mt-[37px] h-[184px] w-[7px] rounded-full bg-[#6b6b6b]" />
      <svg viewBox="0 0 8 6" className="mt-[216px] h-[6px] w-[8px]"><path d="M4 6 L8 0 H0 Z" fill="#666" /></svg>
    </div>
  </div>
);

const TabsBar = () => (
  <div className="relative flex h-[27px] items-start bg-[#e4e3e6] text-[11.8px] text-[#444]">
    <svg viewBox="0 0 6 8" className="mt-[9px] ml-[19px] h-[8px] w-[6px]" fill="none" stroke="#a5a5a5" strokeWidth="1.2"><path d="M5 0.5 L1 4 L5 7.5" /></svg>
    <svg viewBox="0 0 6 8" className="mt-[9px] ml-[21px] h-[8px] w-[6px]" fill="none" stroke="#a5a5a5" strokeWidth="1.2"><path d="M1 0.5 L5 4 L1 7.5" /></svg>
    <div className="ml-[40px] flex h-[24px] w-[101px] justify-center rounded-b-[4px] bg-white">
      <div className="mt-[3px] h-[18px] w-[90px] border-b-2 border-[#6c7f74] pl-[1px] leading-[17px] font-semibold tracking-[-0.08px] whitespace-nowrap text-[#333]">P&amp;L IS-N till Aug</div>
    </div>
    <div className="mt-[5px] ml-[16px] w-[164px] leading-[18px] tracking-[-0.2px] whitespace-nowrap">IS-N Monthly 2020-21 MOnthly</div>
    <Sep className="mt-[7px] ml-[10px] h-[14px]" />
    <div className="mt-[5px] ml-[11px] w-[118px] leading-[18px] tracking-[-0.2px] whitespace-nowrap">RIS-I 2021-22 Monthly</div>
    <Sep className="mt-[7px] ml-[10px] h-[14px]" />
    <div className="mt-[5px] ml-[11px] w-[102px] leading-[18px] tracking-[-0.25px] whitespace-nowrap">Electricity Alocation</div>
    <Sep className="mt-[7px] ml-[11px] h-[14px]" />
    <svg viewBox="0 0 10 10" className="mt-[8px] ml-[34px] h-[10px] w-[10px]" stroke="#444" strokeWidth="1.2"><path d="M5 0 V10 M0 5 H10" /></svg>
    <svg viewBox="0 0 3 9" className="mt-[9px] ml-[74px] h-[9px] w-[3px]" fill="#555"><circle cx="1.5" cy="1" r="0.9" /><circle cx="1.5" cy="4.5" r="0.9" /><circle cx="1.5" cy="8" r="0.9" /></svg>
    <div className="mt-[6px] ml-[14px] flex h-[15px] w-[477px] items-center rounded-[4px] bg-[#f6f6f6]">
      <svg viewBox="0 0 6 8" className="ml-[2px] h-[8px] w-[6px]"><path d="M6 0 V8 L0 4 Z" fill="#666" /></svg>
      <div className="ml-[4px] h-[7px] w-[354px] rounded-full bg-[#6b6b6b]" />
      <svg viewBox="0 0 6 8" className="ml-[103px] h-[8px] w-[6px]"><path d="M0 0 V8 L6 4 Z" fill="#666" /></svg>
    </div>
    <svg viewBox="0 0 8 13" className="absolute top-[17px] left-[152px] z-10 h-[13px] w-[8px]"><path d="M0.6 0.8 V10.5 L2.8 8.6 L4.3 12.2 L5.8 11.5 L4.3 8 H7.3 Z" fill="#fff" stroke="#444" strokeWidth="0.8" /></svg>
  </div>
);

const StatusBar = () => (
  <div className="flex h-[18px] items-center bg-[#f3f3f3] pt-[1px] text-[9.2px] text-[#444]">
    <div className="ml-[4px] w-[25px] tracking-[-0.35px]">Ready</div>
    <svg viewBox="0 0 13 13" className="ml-[16px] h-[13px] w-[13px]" fill="none" stroke="#444" strokeWidth="1">
      <circle cx="5.5" cy="2.2" r="1.4" />
      <path d="M1 3.5 L4 5 V7.5 L2 12 H3.5 L5.5 8.5 L6.5 10 M10 3.5 L7 5 V7 M8 8 L12 12 M12 8 L8 12" />
    </svg>
    <div className="ml-[2px] w-[93px] tracking-[-0.45px] whitespace-nowrap">Accessibility: Investigate</div>
    <div className="ml-auto flex h-[18px] w-[32px] items-center justify-center bg-[#dedede]">
      <svg viewBox="0 0 11 11" className="h-[11px] w-[11px]" fill="none" stroke="#333" strokeWidth="1"><path d="M0.5 0.5 H10.5 V10.5 H0.5 Z M0.5 3.5 H10.5 M0.5 7.5 H10.5 M3.5 0.5 V10.5 M7.5 0.5 V10.5" /></svg>
    </div>
    <svg viewBox="0 0 11 11" className="ml-[13px] h-[11px] w-[11px]" fill="none" stroke="#333" strokeWidth="1"><path d="M0.5 0.5 H10.5 V10.5 H0.5 Z M2.5 2.5 H8.5 V8.5 H2.5 Z M4 4.5 H7 M4 6.5 H7" /></svg>
    <svg viewBox="0 0 11 11" className="ml-[22px] h-[11px] w-[11px]" fill="none" stroke="#333" strokeWidth="1"><path d="M0.5 0.5 H10.5 V10.5 H0.5 Z M3.5 0.5 V6 M7.5 0.5 V6 H0.5" /></svg>
    <div className="ml-[16px] h-px w-[5px] bg-[#999]" />
    <div className="ml-[6px] flex h-[10px] w-[83px] items-center">
      <div className="h-px w-[40px] bg-[#555]" />
      <div className="h-[9px] w-[3px] bg-[#444]" />
      <div className="h-px w-[40px] bg-[#555]" />
    </div>
    <svg viewBox="0 0 5 5" className="ml-[5px] h-[5px] w-[5px]" stroke="#999"><path d="M2.5 0 V5 M0 2.5 H5" /></svg>
    <div className="mr-[6px] ml-[12px] w-[21px] tracking-[-0.5px]">100%</div>
  </div>
);

export default function App() {
  return (
    <div className="h-[720px] w-[1280px] overflow-hidden bg-black font-['Open_Sans','Noto_Sans',sans-serif]">
      <div className="ml-[1px] flex h-[674px] w-[1278px] flex-col bg-[#e1e5e7]">
        <TitleBar />
        <MenuBar />
        <Ribbon />
        <FormulaBar />
        <Sheet />
        <TabsBar />
        <StatusBar />
      </div>
    </div>
  );
}
